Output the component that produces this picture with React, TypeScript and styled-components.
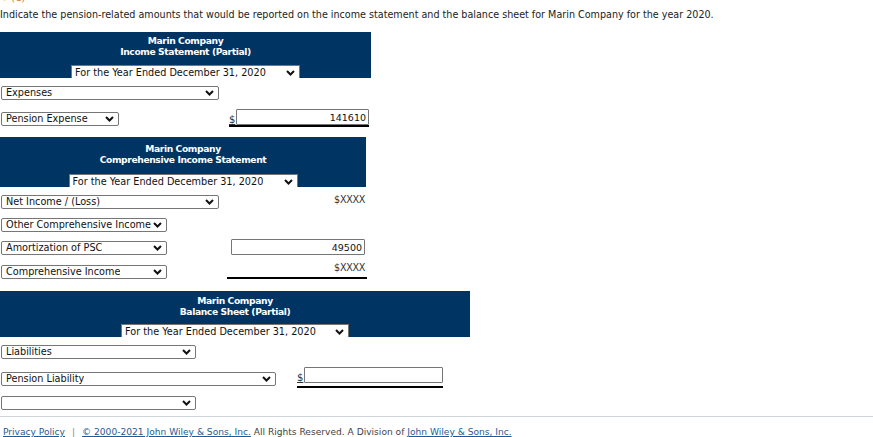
import React from "react";
import styled, { createGlobalStyle } from "styled-components";

const Global = createGlobalStyle`
  html, body { margin: 0; padding: 0; background: #fff; }
  body { font-family: "DejaVu Sans", Verdana, sans-serif; color: #222; overflow: hidden; }
`;

const Page = styled.div`
  width: 873px;
  height: 437px;
  overflow: hidden;
`;

const PartLabel = styled.div`
  margin-top: -8px;
  height: 12px;
  padding-left: 2px;
  font-size: 11px;
  line-height: 12px;
  color: #e87722;
`;

const Instruction = styled.div`
  margin-top: 5px;
  font-size: 9.6px;
  line-height: 12px;
  color: #222;
  white-space: nowrap;
`;

const Header = styled.div<{ $w: number; $mt: number; $h: number; $pt: number }>`
  width: ${(p) => p.$w}px;
  height: ${(p) => p.$h}px;
  margin-top: ${(p) => p.$mt}px;
  padding-top: ${(p) => p.$pt}px;
  background: #003462;
  color: #fff;
  display: flex;
  flex-direction: column;
  align-items: center;
  box-sizing: border-box;
`;

const Title = styled.div`
  font-weight: bold;
  font-size: 9.2px;
  line-height: 11px;
  letter-spacing: -0.4px;
  text-align: center;
`;

const HeaderSelectWrap = styled.div`
  margin-top: auto;
`;

const SelectBox = styled.div<{ $w: number; $top?: boolean }>`
  width: ${(p) => p.$w}px;
  height: ${(p) => (p.$top ? 13 : 14)}px;
  box-sizing: border-box;
  display: flex;
  align-items: center;
  justify-content: space-between;
  border: 1px solid #767676;
  border-bottom: ${(p) => (p.$top ? "none" : "1px solid #767676")};
  border-radius: ${(p) => (p.$top ? "0" : "2px")};
  background: #fff;
  color: #111;
  font-size: 9.7px;
  line-height: 12px;
  padding: ${(p) => (p.$top ? "1px 4px 0 3px" : "0 4px 0 4px")};
  cursor: default;
`;

const SelectText = styled.span`
  white-space: nowrap;
  overflow: hidden;
`;

const Chevron = styled.svg`
  flex: none;
  width: 9px;
  height: 6px;
  margin-left: 2px;
`;

const Select = ({ w, value, top }: { w: number; value: string; top?: boolean }) => (
  <SelectBox $w={w} $top={top} role="combobox">
    <SelectText>{value}</SelectText>
    <Chevron viewBox="0 0 9 6">
      <path d="M1 1 L4.5 4.5 L8 1" fill="none" stroke="#111" strokeWidth="2" />
    </Chevron>
  </SelectBox>
);

const Row = styled.div<{ $mt: number; $cols: string }>`
  display: grid;
  grid-template-columns: ${(p) => p.$cols};
  align-items: start;
  margin-top: ${(p) => p.$mt}px;
  padding-left: 1px;
`;

const SelectCell = styled.div<{ $pt?: number }>`
  padding-top: ${(p) => p.$pt ?? 0}px;
`;

const Amount = styled.div<{ $line?: boolean; $pb?: number; $h?: number }>`
  display: flex;
  align-items: flex-end;
  height: ${(p) => (p.$h ? `${p.$h}px` : "auto")};
  padding-bottom: ${(p) => p.$pb ?? 0}px;
  border-bottom: ${(p) => (p.$line ? "2px solid #000" : "none")};
  box-sizing: border-box;
`;

const Dollar = styled.span`
  font-size: 10px;
  line-height: 11px;
  width: 7px;
  color: #333;
  text-decoration: underline;
`;

const AmountInput = styled.input`
  flex: 1;
  min-width: 0;
  height: 16px;
  box-sizing: border-box;
  margin: 0;
  border: 1px solid #767676;
  border-radius: 1px;
  text-align: right;
  padding: 0 2px;
  font-family: "DejaVu Sans", Verdana, sans-serif;
  font-size: 9.5px;
  color: #111;
  outline: none;
`;

const Placeholder = styled.div<{ $top?: boolean }>`
  width: 100%;
  align-self: ${(p) => (p.$top ? "flex-start" : "auto")};
  margin-top: ${(p) => (p.$top ? "-2px" : "0")};
  font-size: 9.6px;
  line-height: 10px;
  text-align: right;
  color: #333;
  padding-right: 2px;
  letter-spacing: -0.3px;
  box-sizing: border-box;
`;

const Footer = styled.div`
  margin-top: 6px;
  border-top: 1px solid #cfd4d9;
  padding: 10px 0 0 3px;
  font-size: 9.1px;
  line-height: 11px;
  color: #444;
  white-space: nowrap;
`;

const FLink = styled.a`
  color: #1e5b96;
  text-decoration: underline;
`;

const Sep = styled.span`
  color: #888;
  margin: 0 7px;
`;

const PERIOD = "For the Year Ended December 31, 2020";

export default function App() {
  return (
    <Page>
      <Global />
      <PartLabel>▾ (c)</PartLabel>
      <Instruction>
        Indicate the pension-related amounts that would be reported on the income statement and the balance sheet for
        Marin Company for the year 2020.
      </Instruction>

      <Header $w={371} $mt={11} $h={46} $pt={3}>
        <Title>Marin Company</Title>
        <Title>Income Statement (Partial)</Title>
        <HeaderSelectWrap>
          <Select w={229} value={PERIOD} top />
        </HeaderSelectWrap>
      </Header>
      <Row $mt={8} $cols="228px 140px">
        <Select w={218} value="Expenses" />
      </Row>
      <Row $mt={9} $cols="228px 140px">
        <SelectCell $pt={3}>
          <Select w={118} value="Pension Expense" />
        </SelectCell>
        <Amount $line>
          <Dollar>$</Dollar>
          <AmountInput defaultValue="141610" />
        </Amount>
      </Row>

      <Header $w={366} $mt={10} $h={50} $pt={6}>
        <Title>Marin Company</Title>
        <Title>Comprehensive Income Statement</Title>
        <HeaderSelectWrap>
          <Select w={229} value={PERIOD} top />
        </HeaderSelectWrap>
      </Header>
      <Row $mt={8} $cols="226px 140px">
        <Select w={218} value="Net Income / (Loss)" />
        <Placeholder>$XXXX</Placeholder>
      </Row>
      <Row $mt={9} $cols="226px 140px">
        <Select w={166} value="Other Comprehensive Income" />
      </Row>
      <Row $mt={7} $cols="230px 134px">
        <SelectCell $pt={2}>
          <Select w={166} value="Amortization of PSC" />
        </SelectCell>
        <Amount>
          <AmountInput defaultValue="49500" />
        </Amount>
      </Row>
      <Row $mt={10} $cols="226px 140px">
        <Select w={166} value="Comprehensive Income" />
        <Amount $line $h={14}>
          <Placeholder $top>$XXXX</Placeholder>
        </Amount>
      </Row>

      <Header $w={470} $mt={12} $h={46} $pt={4}>
        <Title>Marin Company</Title>
        <Title>Balance Sheet (Partial)</Title>
        <HeaderSelectWrap>
          <Select w={228} value={PERIOD} top />
        </HeaderSelectWrap>
      </Header>
      <Row $mt={8} $cols="296px 146px">
        <Select w={195} value="Liabilities" />
      </Row>
      <Row $mt={8} $cols="296px 146px">
        <SelectCell $pt={5}>
          <Select w={275} value="Pension Liability" />
        </SelectCell>
        <Amount $line $pb={3}>
          <Dollar>$</Dollar>
          <AmountInput defaultValue="" />
        </Amount>
      </Row>
      <Row $mt={8} $cols="296px 146px">
        <Select w={195} value="" />
      </Row>

      <Footer>
        <FLink>Privacy Policy</FLink>
        <Sep>|</Sep>
        <FLink>© 2000-2021 John Wiley &amp; Sons, Inc.</FLink> All Rights Reserved. A Division of{" "}
        <FLink>John Wiley &amp; Sons, Inc.</FLink>
      </Footer>
    </Page>
  );
}
